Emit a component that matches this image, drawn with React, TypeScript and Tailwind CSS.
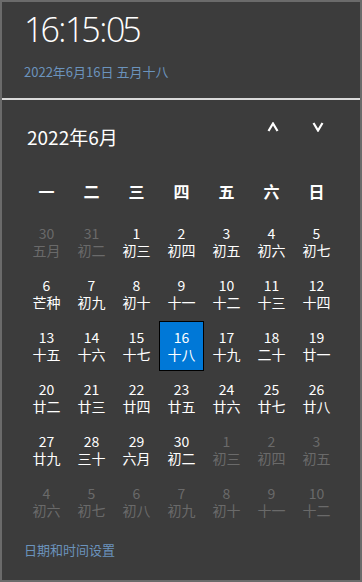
import React from "react";

type Day = { n: number; l: string; o?: boolean; s?: boolean };

const rows: Day[][] = [
  [
    { n: 30, l: "五月", o: true },
    { n: 31, l: "初二", o: true },
    { n: 1, l: "初三" },
    { n: 2, l: "初四" },
    { n: 3, l: "初五" },
    { n: 4, l: "初六" },
    { n: 5, l: "初七" },
  ],
  [
    { n: 6, l: "芒种" },
    { n: 7, l: "初九" },
    { n: 8, l: "初十" },
    { n: 9, l: "十一" },
    { n: 10, l: "十二" },
    { n: 11, l: "十三" },
    { n: 12, l: "十四" },
  ],
  [
    { n: 13, l: "十五" },
    { n: 14, l: "十六" },
    { n: 15, l: "十七" },
    { n: 16, l: "十八", s: true },
    { n: 17, l: "十九" },
    { n: 18, l: "二十" },
    { n: 19, l: "廿一" },
  ],
  [
    { n: 20, l: "廿二" },
    { n: 21, l: "廿三" },
    { n: 22, l: "廿四" },
    { n: 23, l: "廿五" },
    { n: 24, l: "廿六" },
    { n: 25, l: "廿七" },
    { n: 26, l: "廿八" },
  ],
  [
    { n: 27, l: "廿九" },
    { n: 28, l: "三十" },
    { n: 29, l: "六月" },
    { n: 30, l: "初二" },
    { n: 1, l: "初三", o: true },
    { n: 2, l: "初四", o: true },
    { n: 3, l: "初五", o: true },
  ],
  [
    { n: 4, l: "初六", o: true },
    { n: 5, l: "初七", o: true },
    { n: 6, l: "初八", o: true },
    { n: 7, l: "初九", o: true },
    { n: 8, l: "初十", o: true },
    { n: 9, l: "十一", o: true },
    { n: 10, l: "十二", o: true },
  ],
];

const weekdays = ["一", "二", "三", "四", "五", "六", "日"];

export default function App() {
  return (
    <div className="w-[362px] h-[582px] border-2 border-[#6b6b6b] bg-[#3c3c3c] flex flex-col font-['Noto_Sans_CJK_SC',sans-serif] text-white overflow-hidden">
      <div className="h-[96px] pl-[22px] flex flex-col">
        <div className="mt-[9px] text-[34px] leading-[36px] font-light tracking-[-3px] font-['Open_Sans','Noto_Sans_CJK_SC',sans-serif]">
          16<span className="mx-[1.5px]">:</span>15<span className="mx-[1.5px]">:</span>05
        </div>
        <div className="mt-[17px] text-[13px] leading-[16px] text-[#6b93bc]">2022年6月16日 五月十八</div>
      </div>
      <div className="h-[2px] bg-[#dadada]" />
      <div className="mt-[25px] h-[24px] flex items-center pl-[25px] pr-[36px]">
        <div className="text-[19px] leading-[24px] flex-1">2022年6月</div>
        <div className="flex items-center gap-[33px] -mt-[20px]">
          <svg width="12" height="10" viewBox="0 0 12 10">
            <polyline points="1.5,9 6,1.5 10.5,9" fill="none" stroke="white" strokeWidth="2.2" />
          </svg>
          <svg width="12" height="10" viewBox="0 0 12 10">
            <polyline points="1.5,1 6,8.5 10.5,1" fill="none" stroke="white" strokeWidth="2.2" />
          </svg>
        </div>
      </div>
      <div className="mt-[30px] pl-[22px] grid grid-cols-[repeat(7,45px)] h-[24px] items-center">
        {weekdays.map((w) => (
          <div key={w} className="text-center text-[16px] leading-[24px] font-bold">
            {w}
          </div>
        ))}
      </div>
      <div className="mt-[14px] pl-[22px] flex flex-col">
        {rows.map((r, i) => (
          <div key={i} className="grid grid-cols-[repeat(7,45px)] h-[52px]">
            {r.map((d, j) => (
              <div
                key={j}
                className={
                  d.s
                    ? "h-[50px] bg-[#0078d7] border border-black flex flex-col items-center justify-center text-white"
                    : d.o
                    ? "h-[50px] flex flex-col items-center justify-center text-[#6a6a6a]"
                    : "h-[50px] flex flex-col items-center justify-center text-white"
                }
              >
                <div className="text-[14px] leading-[17px]">{d.n}</div>
                <div className="text-[14px] leading-[17px]">{d.l}</div>
              </div>
            ))}
          </div>
        ))}
      </div>
      <div className="mt-[13px] pl-[22px] text-[13px] leading-[16px] text-[#6b93bc]">日期和时间设置</div>
    </div>
  );
}
